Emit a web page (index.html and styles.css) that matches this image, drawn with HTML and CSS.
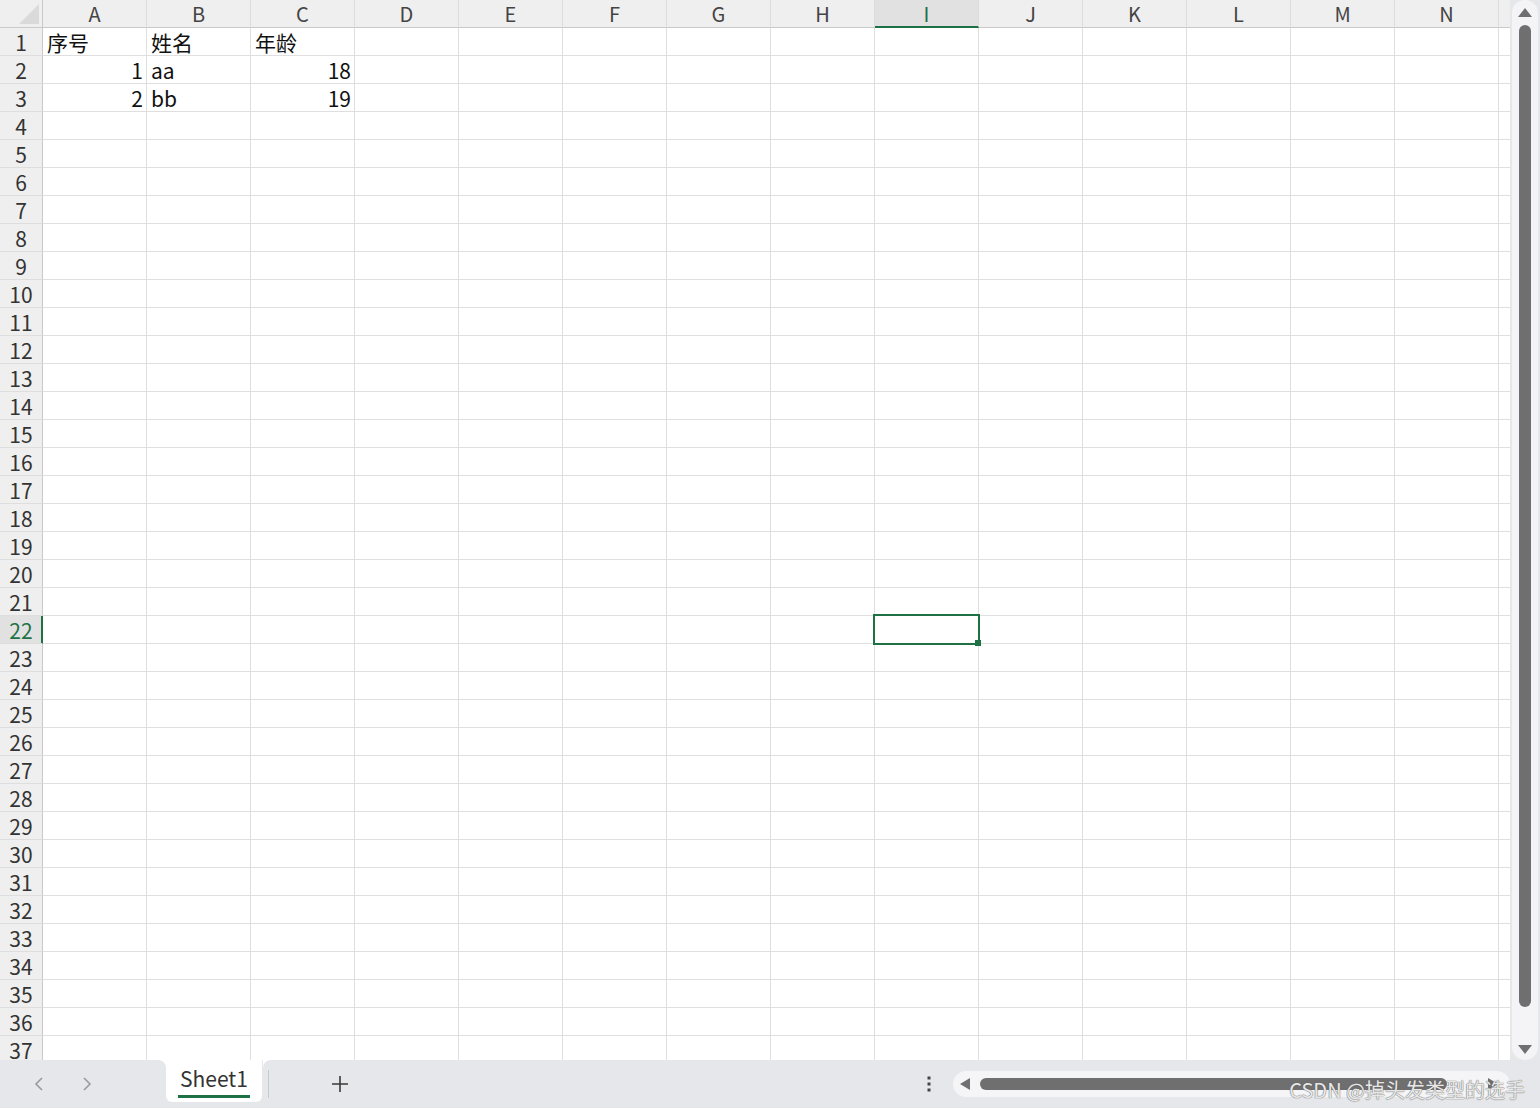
FILE: index.html
```html
<!DOCTYPE html>
<html lang="zh">
<head>
<meta charset="utf-8">
<title>Sheet1</title>
<link rel="stylesheet" href="styles.css">
</head>
<body>
<div class="app">
  <div class="main">
    <div class="sheet">
      <div class="colhead">
        <div class="corner"><svg width="20" height="20" viewBox="0 0 20 20"><polygon points="20,0 20,20 0,20" fill="#dadada"/></svg></div>
        <div class="ch">A</div><div class="ch">B</div><div class="ch">C</div><div class="ch">D</div>
        <div class="ch">E</div><div class="ch">F</div><div class="ch">G</div><div class="ch">H</div>
        <div class="ch sel">I</div><div class="ch">J</div><div class="ch">K</div><div class="ch">L</div>
        <div class="ch">M</div><div class="ch">N</div><div class="ch"></div>
      </div>
      <div class="body">
        <div class="rowhead">
          <div class="rh">1</div><div class="rh">2</div><div class="rh">3</div><div class="rh">4</div>
          <div class="rh">5</div><div class="rh">6</div><div class="rh">7</div><div class="rh">8</div>
          <div class="rh">9</div><div class="rh">10</div><div class="rh">11</div><div class="rh">12</div>
          <div class="rh">13</div><div class="rh">14</div><div class="rh">15</div><div class="rh">16</div>
          <div class="rh">17</div><div class="rh">18</div><div class="rh">19</div><div class="rh">20</div>
          <div class="rh">21</div><div class="rh sel">22</div><div class="rh">23</div><div class="rh">24</div>
          <div class="rh">25</div><div class="rh">26</div><div class="rh">27</div><div class="rh">28</div>
          <div class="rh">29</div><div class="rh">30</div><div class="rh">31</div><div class="rh">32</div>
          <div class="rh">33</div><div class="rh">34</div><div class="rh">35</div><div class="rh">36</div>
          <div class="rh">37</div>
        </div>
        <div class="cells">
          <div class="row"><div class="c">序号</div><div class="c">姓名</div><div class="c">年龄</div></div>
          <div class="row"><div class="c num">1</div><div class="c">aa</div><div class="c num">18</div></div>
          <div class="row"><div class="c num">2</div><div class="c">bb</div><div class="c num">19</div></div>
          <div class="selbox"></div>
          <div class="handle"></div>
        </div>
      </div>
    </div>
    <div class="vscroll">
      <div class="vtrack">
        <svg class="up" width="14" height="9" viewBox="0 0 14 9"><polygon points="7,0 14,9 0,9" fill="#6f6f6f"/></svg>
        <div class="vthumb"></div>
        <svg class="down" width="14" height="9" viewBox="0 0 14 9"><polygon points="0,0 14,0 7,9" fill="#6f6f6f"/></svg>
      </div>
    </div>
  </div>
  <div class="bottombar">
    <div class="bb-left">
      <svg class="chev" width="10" height="14" viewBox="0 0 10 14"><polyline points="8,1 2,7 8,13" fill="none" stroke="#9a9a9a" stroke-width="1.6"/></svg>
      <svg class="chev next" width="10" height="14" viewBox="0 0 10 14"><polyline points="2,1 8,7 2,13" fill="none" stroke="#9a9a9a" stroke-width="1.6"/></svg>
    </div>
    <div class="bb-tabwrap">
      <div class="tab"><span class="tabname">Sheet1</span><span class="tabline"></span></div>
    </div>
    <div class="bb-right">
      <span class="sep"></span>
      <svg class="plus" width="18" height="18" viewBox="0 0 18 18"><path d="M9 1V17M1 9H17" stroke="#3a3a3a" stroke-width="1.6" fill="none"/></svg>
      <svg class="more" width="4" height="16" viewBox="0 0 4 16"><rect x="0.5" y="0.5" width="3" height="3" fill="#444"/><rect x="0.5" y="6.5" width="3" height="3" fill="#444"/><rect x="0.5" y="12.5" width="3" height="3" fill="#444"/></svg>
      <div class="htrack">
        <svg class="hl" width="10" height="12" viewBox="0 0 10 12"><polygon points="0,6 10,0 10,12" fill="#6f6f6f"/></svg>
        <div class="hthumb"></div>
        <svg class="hr" width="10" height="12" viewBox="0 0 10 12"><polygon points="10,6 0,0 0,12" fill="#6f6f6f"/></svg>
      </div>
      <div class="watermark">CSDN @掉头发类型的选手</div>
    </div>
  </div>
</div>
</body>
</html>
```
FILE: styles.css
```css
* { box-sizing: border-box; }
body {
  margin: 0;
  width: 1540px;
  height: 1108px;
  overflow: hidden;
  background: #fff;
  font-family: "Noto Sans CJK SC", "Noto Sans", sans-serif;
}
.app { display: flex; flex-direction: column; height: 1108px; }
.main { display: flex; height: 1060px; flex: none; }
.sheet { width: 1510px; flex: none; display: flex; flex-direction: column; overflow: hidden; }

.colhead { display: flex; height: 28px; flex: none; background: #efefef; }
.corner {
  width: 43px; flex: none; height: 28px;
  border-right: 1px solid #c9c9c9; border-bottom: 1px solid #c9c9c9;
  display: flex; justify-content: flex-end; align-items: flex-end;
  padding: 0 3px 3px 0;
}
.corner svg { display: block; }
.ch {
  width: 104px; flex: none; height: 28px;
  border-right: 1px solid #dcdcdc; border-bottom: 1px solid #c9c9c9;
  text-align: center; font-size: 20px; line-height: 26px; color: #444;
  padding-top: 1px;
}
.ch.sel { background: #e1e1e1; border-bottom: 2px solid #1e7145; color: #1e7145; }

.body { display: flex; flex: 1; }
.rowhead { width: 43px; flex: none; background: #efefef; }
.rh {
  height: 28px; width: 43px;
  border-right: 1px solid #c9c9c9; border-bottom: 1px solid #dedede;
  text-align: center; font-size: 21px; line-height: 27px; color: #333;
  padding-top: 1px;
}
.rh.sel { background: #e1e1e1; color: #1e7145; border-right-color: #1e7145; box-shadow: inset -1px 0 0 #1e7145; }

.cells {
  position: relative; flex: 1;
  background-image:
    linear-gradient(to right, #dfdfdf 1px, transparent 1px),
    linear-gradient(to bottom, #dfdfdf 1px, transparent 1px);
  background-size: 104px 28px, 104px 28px;
  background-position: 103px 0, 0 27px;
}
.row { display: flex; height: 28px; }
.c {
  width: 104px; flex: none; height: 28px;
  padding: 1px 4px 0 4px;
  font-size: 21px; line-height: 27px; color: #111; white-space: nowrap;
}
.c.num { text-align: right; }
.selbox {
  position: absolute; left: 830px; top: 586px; width: 107px; height: 31px;
  border: 2px solid #1e7145;
}
.handle { position: absolute; left: 932px; top: 612px; width: 6px; height: 6px; background: #1e7145; }

.vscroll { width: 30px; flex: none; background: #e6e7eb; }
.vtrack {
  width: 26px; margin-left: 2px; height: 1060px;
  background: #f4f4f6; border-radius: 13px;
  display: flex; flex-direction: column; align-items: center;
}
.vtrack .up { margin-top: 8px; display: block; }
.vthumb { margin-top: 8px; width: 12px; height: 982px; border-radius: 6px; background: #6f6f6f; }
.vtrack .down { margin-top: auto; margin-bottom: 6px; display: block; }

.bottombar { height: 48px; flex: none; display: flex; background: #fff; }
.bb-left {
  width: 166px; flex: none; background: #e6e7eb; border-top-right-radius: 8px;
  display: flex; align-items: center; padding-left: 34px;
}
.chev { display: block; }
.chev.next { margin-left: 38px; }
.bb-tabwrap { width: 97px; flex: none; background: #e6e7eb; }
.tab {
  height: 42px; width: 96px; background: #fff; border-radius: 0 0 6px 6px;
  display: flex; flex-direction: column; align-items: center; padding-top: 3px;
}
.tabname { font-size: 21px; line-height: 30px; color: #333; }
.tabline { display: block; width: 72px; height: 3px; background: #1e7145; margin-top: 2px; }
.bb-right {
  flex: 1; background: #e6e7eb; border-top-left-radius: 8px;
  display: flex; align-items: center; position: relative;
}
.sep { width: 1px; height: 28px; background: #c9c9cd; margin-left: 5px; }
.plus { display: block; margin-left: 62px; }
.more { display: block; margin-left: auto; margin-right: 22px; }
.htrack {
  width: 557px; height: 26px; margin-right: 30px;
  background: #f5f5f7; border-radius: 13px;
  display: flex; align-items: center;
}
.hl { display: block; margin-left: 7px; }
.hthumb { width: 467px; height: 12px; border-radius: 6px; background: #6f6f6f; margin-left: 10px; }
.hr { display: block; margin-left: auto; margin-right: 12px; }
.watermark {
  position: absolute; right: 15px; bottom: 6px;
  font-size: 20px; line-height: 24px; white-space: nowrap;
  color: rgba(250, 250, 250, 0.9);
  text-shadow: 0 0 1px #666, 0 0 1px #666;
}
```
